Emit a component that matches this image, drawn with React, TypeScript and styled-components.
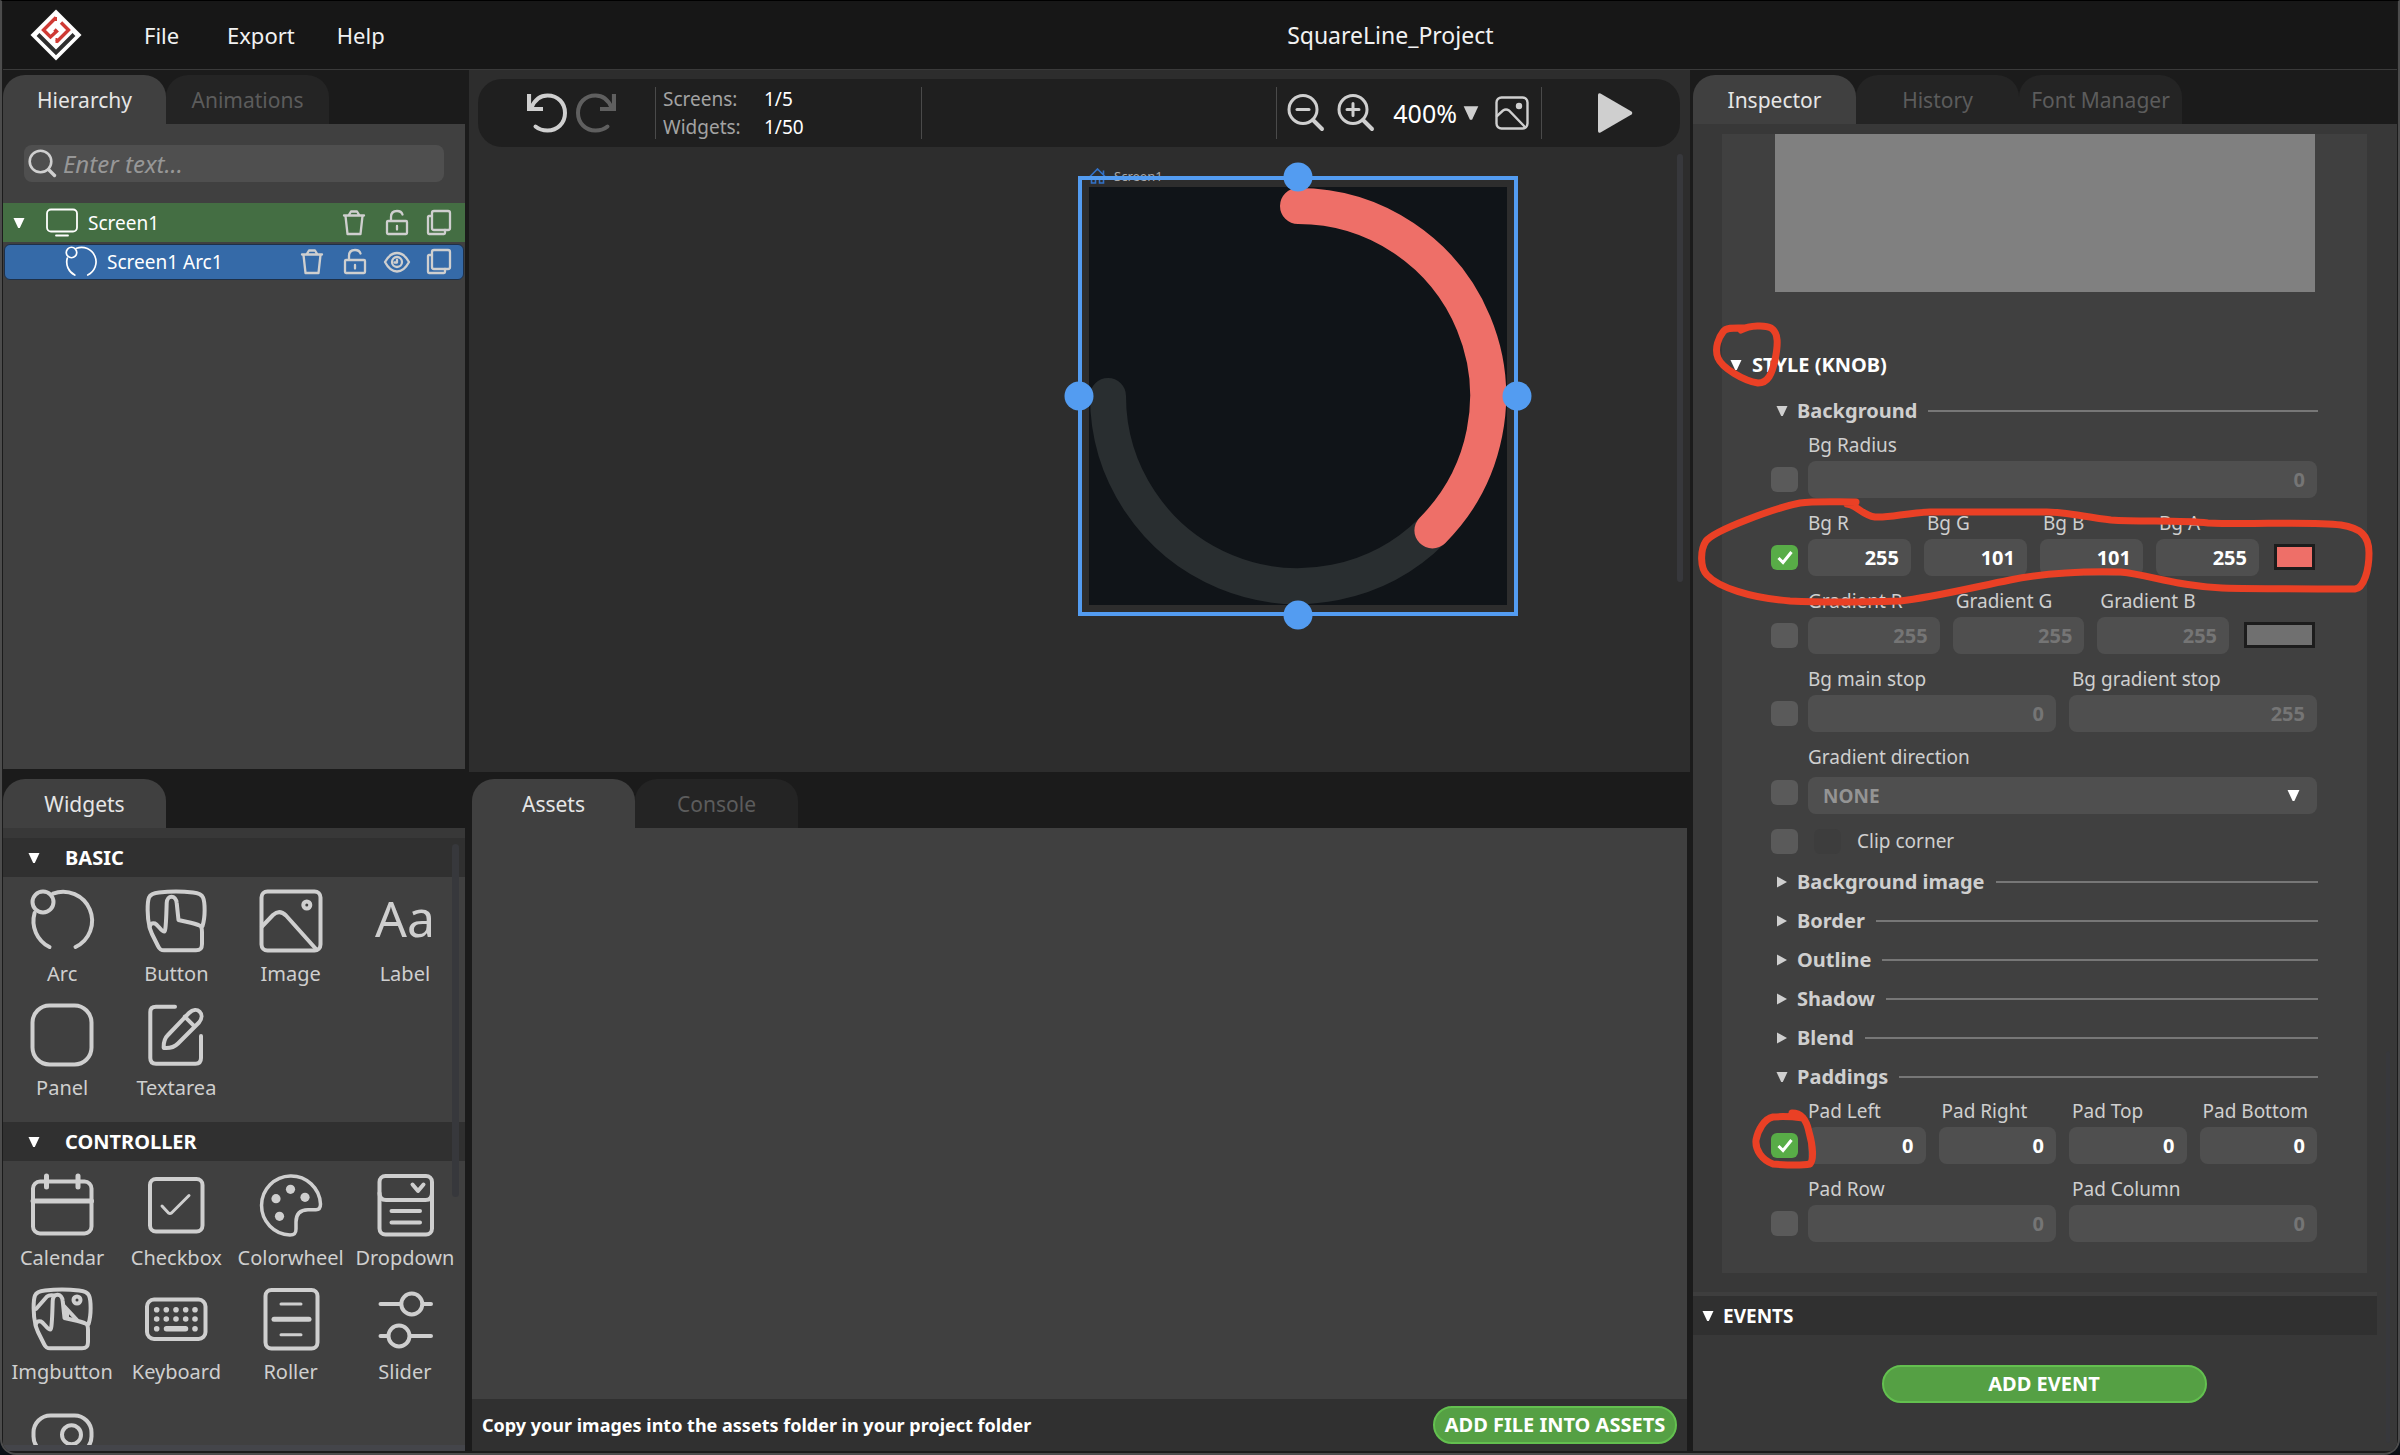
import React, { useId, useState } from "react";
import styled, { createGlobalStyle, css } from "styled-components";

const c = {
  ink: "#ffffff",
  soft: "#cfcfcf",
  dim: "#5c5c5c",
  frame: "#1b1b1b",
  panel: "#404040",
  gutter: "#383838",
  band: "#303030",
  field: "#4f4f4f",
  rail: "#37383c",
  green: "#55a044",
  greenEdge: "#63c04f",
  blue: "#539cf1",
  coral: "#ee6f68",
  marker: "#ea4025",
};

const GlobalStyle = createGlobalStyle`
  * { box-sizing: border-box; }
  body {
    margin: 0;
    background: #0b1016;
    color: ${c.soft};
    font-family: "Noto Sans", "Open Sans", sans-serif;
    font-size: 19px;
    line-height: 26px;
  }
  button, input, select { font: inherit; color: inherit; margin: 0; }
  button { border: 0; padding: 0; background: none; cursor: pointer; }
  svg { display: block; flex: none; }
`;

/* ---------- window frame ---------- */

const Window = styled.div`
  position: relative;
  display: flex;
  flex-direction: column;
  height: 100vh;
  padding: 0 1px 2px 1px;
  background: ${c.frame};
  border: 2px solid #4c4c4c;
  border-top: 1px solid #000;
  border-radius: 0 0 16px 16px;
  overflow: hidden;
`;

const Header = styled.header`
  display: flex;
  align-items: center;
  height: 69px;
  flex: none;
  padding-left: 27px;
  padding-right: 22px;
  background: #171717;
  border-bottom: 1px solid #3a3a3a;
`;

const Menu = styled.nav`
  display: flex;
  padding-left: 41px;
`;

const MenuButton = styled.button`
  min-width: 83px;
  padding: 0 21px;
  font-size: 22px;
  line-height: 30px;
  text-align: left;
  color: #f2f2f2;
`;

const Title = styled.h1`
  flex: 1;
  margin: 0;
  font-size: 23px;
  line-height: 30px;
  font-weight: 400;
  text-align: center;
  color: #f2f2f2;
`;

const Body = styled.div`
  display: grid;
  grid-template-columns: 462px minmax(0, 1fr) 704px;
  flex: 1;
  min-height: 0;
`;

const Column = styled.div<{ $gap: number; $top?: number }>`
  display: flex;
  flex-direction: column;
  gap: ${(p) => p.$gap}px;
  padding-top: ${(p) => p.$top ?? 0}px;
  min-width: 0;
  min-height: 0;
`;

const Dock = styled.section<{ $grow: number }>`
  display: flex;
  flex-direction: column;
  flex: ${(p) => p.$grow} 1 0;
  min-height: 0;
`;

const TabBar = styled.div`
  display: flex;
  flex: none;
`;

const TabButton = styled.button<{ $on: boolean }>`
  width: 163px;
  height: 49px;
  font-size: 21px;
  line-height: 28px;
  border-radius: 22px 22px 0 0;
  background: ${(p) => (p.$on ? c.panel : "#242424")};
  color: ${(p) => (p.$on ? "#e6e6e6" : c.dim)};
`;

const PanelBody = styled.div<{ $bg?: string }>`
  position: relative;
  display: flex;
  flex-direction: column;
  flex: 1;
  min-height: 0;
  overflow: hidden;
  background: ${(p) => p.$bg ?? c.panel};
`;

const Rail = styled.div<{ $w: number; $h: number }>`
  position: absolute;
  width: ${(p) => p.$w}px;
  height: ${(p) => p.$h}px;
  border-radius: 4px;
  background: ${c.rail};
`;
const WidgetRail = styled(Rail)`top: 16px; right: 6px;`;
const CanvasRail = styled(Rail)`top: 84px; right: 7px;`;
const InspectorRail = styled(Rail)`bottom: 8px; right: 7px;`;

/* ---------- hierarchy ---------- */

const SearchBox = styled.label`
  display: flex;
  align-items: center;
  gap: 6px;
  height: 37px;
  margin: 21px;
  padding: 0 4px;
  border-radius: 8px;
  background: ${c.field};
`;

const SearchInput = styled.input`
  flex: 1;
  min-width: 0;
  padding: 0;
  border: 0;
  outline: 0;
  background: none;
  font-size: 24px;
  line-height: 32px;
  font-style: italic;
  &::placeholder { color: #979797; opacity: 1; }
`;

const TreeRow = styled.div<{ $selected?: boolean }>`
  display: flex;
  align-items: center;
  flex: none;
  height: 39px;
  padding: 0 12px 0 10px;
  background: #446e43;
  color: ${c.ink};
  ${(p) =>
    p.$selected &&
    css`
      height: 36px;
      margin: 2px 1px 0;
      padding: 0 10px 0 60px;
      border: 1px solid #1e3048;
      border-radius: 6px;
      background: #356aa8;
    `}
`;

const TreeName = styled.span`
  flex: 1;
  padding-left: 10px;
`;

const TreeIcon = styled.span`
  display: flex;
  margin-left: 21px;
`;

const RowActions = styled.span`
  display: flex;
  gap: 14px;
`;

const IconButton = styled.button`
  display: flex;
  color: ${c.soft};
`;

/* ---------- widgets ---------- */

const GroupHeader = styled.button`
  display: flex;
  align-items: center;
  gap: 25px;
  flex: none;
  height: 39px;
  padding-left: 25px;
  background: ${c.band};
  color: ${c.ink};
  font-size: 20px;
  font-weight: 700;
`;

const WidgetStack = styled.div`
  display: flex;
  flex-direction: column;
  flex: 1;
  min-height: 0;
  padding-top: 10px;
  overflow: hidden;
  background: ${c.gutter};
`;

const WidgetGrid = styled.div`
  display: grid;
  grid-template-columns: repeat(4, minmax(0, 1fr));
  flex: none;
  padding: 0 3px 17px 2px;
  background: ${c.panel};
`;

const WidgetTile = styled.button`
  display: flex;
  flex-direction: column;
  align-items: center;
  gap: 7px;
  height: 114px;
  padding-top: 12px;
  font-size: 20px;
  line-height: 28px;
  color: ${c.soft};
`;

const GlyphSvg = styled.svg`
  overflow: visible;
`;

const BottomStrip = styled.div`
  flex: none;
  height: 6px;
  background: #44454a;
`;

/* ---------- canvas ---------- */

const Center = styled(Column)`
  padding-left: 4px;
  padding-right: 3px;
`;

const Canvas = styled.main`
  position: relative;
  display: flex;
  flex-direction: column;
  flex: 702 1 0;
  min-height: 0;
  background: #2d2d2d;
`;

const Toolbar = styled.div`
  display: flex;
  align-items: center;
  height: 68px;
  margin: 9px 10px 0 9px;
  padding: 0 47px 0 49px;
  border-radius: 24px;
  background: #1f1f1f;
`;

const Cluster = styled.div<{ $gap: number; $pad: string }>`
  display: flex;
  align-items: center;
  gap: ${(p) => p.$gap}px;
  padding: ${(p) => p.$pad};
`;

const Divider = styled.span`
  width: 1px;
  height: 52px;
  background: #4a4a4a;
`;

const Spacer = styled.span`
  flex: 1;
`;

const Stats = styled.dl`
  display: grid;
  grid-template-columns: 101px auto;
  width: 265px;
  margin: 0;
  padding-left: 7px;
  line-height: 28px;
`;
const StatName = styled.dt`color: #a3a3a3;`;
const StatValue = styled.dd`margin: 0; color: ${c.ink};`;

const ZoomButton = styled.button`
  display: flex;
  align-items: center;
  gap: 6px;
  padding: 0 4px 0 6px;
  font-size: 25px;
  line-height: 34px;
  color: ${c.ink};
`;

const Artboard = styled.div`
  position: absolute;
  left: 595px;
  top: 92px;
  width: 468px;
`;

const ScreenTag = styled.div`
  position: absolute;
  left: 25px;
  top: 5px;
  display: flex;
  align-items: center;
  gap: 8px;
  font-size: 13px;
  line-height: 18px;
  color: #a8a8a8;
`;

const ArcDrawing = styled.svg`
  position: relative;
`;

/* ---------- assets ---------- */

const AssetDock = styled(Dock)`
  margin: 0 3px;
`;

const AssetFooter = styled.footer`
  display: flex;
  align-items: center;
  justify-content: space-between;
  flex: none;
  height: 52px;
  padding: 0 10px;
  background: ${c.band};
  color: ${c.ink};
  font-weight: 700;
  font-size: 18px;
`;

const PillButton = styled.button<{ $wide?: boolean }>`
  height: 38px;
  width: ${(p) => (p.$wide ? 325 : 244)}px;
  border: 2px solid ${c.greenEdge};
  border-radius: 19px;
  background: ${c.green};
  color: ${c.ink};
  font-size: 20px;
  font-weight: 700;
  white-space: nowrap;
`;

/* ---------- inspector ---------- */

const InspectorScroll = styled.div`
  display: flex;
  flex-direction: column;
  padding-top: 10px;
`;

const Card = styled.div`
  margin: 0 30px 19px 29px;
  padding: 0 49px 20px;
  background: ${c.panel};
`;

const Preview = styled.div`
  height: 158px;
  margin: 0 3px 53px 4px;
  background: #808080;
`;

const StyleHeader = styled.button`
  display: flex;
  align-items: center;
  gap: 10px;
  height: 39px;
  margin: 0 0 7px -41px;
  color: ${c.ink};
  font-size: 20px;
  font-weight: 700;
`;

const SectionButton = styled.button`
  display: flex;
  align-items: center;
  gap: 9px;
  width: 100%;
  height: 39px;
  padding-left: 5px;
  color: ${c.soft};
  font-size: 20px;
  font-weight: 700;
  &::after {
    content: "";
    flex: 1;
    height: 2px;
    margin-left: 2px;
    background: #777;
  }
`;

const TriSlot = styled.span`
  display: flex;
  justify-content: center;
  width: 12px;
`;

const Row = styled.div`
  display: flex;
  align-items: flex-end;
  gap: 10px;
  margin-bottom: 11px;
  padding: 1px 1px 0 0;
  margin-top: -1px;
`;

const Group = styled.div`
  padding-top: 1px;
`;

const InlineRow = styled(Row)`
  align-items: center;
  gap: 16px;
  height: 33px;
  margin-bottom: 5px;
`;

const Fields = styled.div`
  display: flex;
  align-items: flex-end;
  gap: 13px;
  flex: 1;
  min-width: 0;
`;

const FieldBox = styled.label<{ $gap?: number }>`
  display: flex;
  flex-direction: column;
  gap: ${(p) => p.$gap ?? 2}px;
  flex: 1 1 0;
  min-width: 0;
`;

const FieldName = styled.span`
  line-height: 28px;
  white-space: nowrap;
  ${FieldBox} + ${FieldBox} & { padding-left: 3px; }
`;

const NumberInput = styled.input`
  width: 100%;
  height: 37px;
  padding: 0 12px;
  border: 0;
  outline: 0;
  border-radius: 8px;
  background: ${c.field};
  color: ${c.ink};
  font-size: 20px;
  font-weight: 700;
  text-align: right;
  &:disabled { color: #757575; }
`;

const SelectShell = styled.span`
  display: grid;
  align-items: center;
  > * { grid-area: 1 / 1; }
  > svg { justify-self: end; margin-right: 17px; pointer-events: none; }
`;

const Select = styled.select`
  width: 100%;
  height: 37px;
  padding: 0 15px;
  border: 0;
  border-radius: 8px;
  appearance: none;
  background: ${c.field};
  color: #949494;
  font-weight: 700;
`;

const Tick = styled.span<{ $raise?: boolean }>`
  display: grid;
  place-items: center;
  width: 27px;
  height: 37px;
  margin-bottom: ${(p) => (p.$raise ? 3 : 0)}px;
  > * { grid-area: 1 / 1; }
  > svg { pointer-events: none; }
`;

const TickInput = styled.input<{ $faint?: boolean }>`
  appearance: none;
  width: 27px;
  height: 25px;
  border-radius: 6px;
  background: ${(p) => (p.$faint ? "#3d3d3d" : "#5a5a5a")};
  &:checked { background: #58ac47; }
`;

const Swatch = styled.input<{ $w: number }>`
  appearance: none;
  width: ${(p) => p.$w}px;
  height: 26px;
  margin: 0 2px 6px;
  padding: 0;
  border: 3px solid #1c1c1c;
  background: none;
  &::-webkit-color-swatch-wrapper { padding: 0; }
  &::-webkit-color-swatch { border: 0; border-radius: 0; }
`;

const EventsHeader = styled.button`
  display: flex;
  align-items: center;
  gap: 9px;
  height: 43px;
  margin-right: 20px;
  padding-left: 9px;
  border-top: 4px solid #3e3e3e;
  background: ${c.band};
  color: ${c.ink};
  font-weight: 700;
`;

const EventsBody = styled.div`
  display: flex;
  justify-content: center;
  padding: 30px 58px 0 56px;
`;

const Annotations = styled.svg`
  position: absolute;
  top: 0;
  right: 0;
  pointer-events: none;
`;

/* ---------- icons ---------- */

const Tri = ({ right, size = 12, color = "currentColor" }: { right?: boolean; size?: number; color?: string }) => (
  <svg width={size} height={size} viewBox="0 0 12 12" fill={color} aria-hidden>
    <path d={right ? "M1 0.5 L11 6 L1 11.5 Z" : "M0.5 1 H11.5 L6.8 11 H5.2 Z"} />
  </svg>
);

const Logo = () => (
  <svg width="52" height="52" viewBox="0 0 52 52" aria-hidden>
    <path d="M26 0.5 L51.5 26 L26 51.5 L0.5 26 Z" fill="#fff" />
    <g fill="none" strokeWidth="3.4">
      <path d="M8 25.5 L26 43.5 L44 25.5" stroke="#2f2f2f" strokeWidth="4" />
      <path d="M26 8.5 L13.5 21 L20.5 28 L26.5 22.5 L24.5 20.5" stroke="#cf3a34" />
      <path d="M31 13.5 L38.5 21 L26.5 33" stroke="#cf3a34" />
      <path d="M26 8 V12 M26.5 29 V34" stroke="#cf3a34" strokeWidth="2" />
    </g>
  </svg>
);

const Small = ({ children, size = 28 }: { children: React.ReactNode; size?: number }) => (
  <svg width={size} height={size} viewBox="0 0 28 28" fill="none" stroke="currentColor" strokeWidth="2.3" strokeLinecap="round" strokeLinejoin="round" aria-hidden>
    {children}
  </svg>
);

const Trash = () => (
  <Small><path d="M3 6.500 H23 M4.500 7 L6.500 25 H19.500 L21.500 7 M7.500 6.500 L10 2.500 H16 L18.500 6.500" /></Small>
);
const Unlock = () => (
  <Small><path d="M5 12 H23 Q24 12 24 13 V24 Q24 25 23 25 H5 Q4 25 4 24 V13 Q4 12 5 12 M8 12 V8 Q8 2 14 2 Q18.5 2 19.5 5.5 M14 17 V20.5" /></Small>
);
const Copy = () => (
  <Small><rect x="7" y="2" width="18" height="19" rx="2" /><path d="M7 7 H4 Q3 7 3 8 V24 Q3 25 4 25 H19 Q20 25 20 24 V21" /></Small>
);
const Eye = () => (
  <Small><path d="M2 14 Q7 5 14 5 Q21 5 26 14 Q21 23.5 14 23.5 Q7 23.5 2 14 Z" /><circle cx="14" cy="14" r="5" /><path d="M14 12 V14.5 H11.5" /></Small>
);

const SearchIcon = () => (
  <svg width="29" height="29" viewBox="0 0 29 29" fill="none" stroke="#d0d0d0" strokeWidth="2.6" strokeLinecap="round" aria-hidden>
    <circle cx="12.5" cy="12.5" r="10.8" /><path d="M20.5 20.5 L26.5 26.5" strokeWidth="3.4" />
  </svg>
);

const Monitor = () => (
  <svg width="32" height="29" viewBox="0 0 32 29" fill="none" stroke="#fff" strokeWidth="1.8" strokeLinecap="round" aria-hidden>
    <rect x="1" y="1.5" width="30" height="22" rx="4" /><path d="M10 27.5 H22" />
  </svg>
);

const ArcShape = () => (
  <>
    <circle cx="13" cy="13" r="10.5" />
    <path d="M23 4.6 A29 29 0 0 1 45.5 58" />
    <path d="M4.6 24 A29 29 0 0 0 19.5 58" />
  </>
);

const SmallArc = () => (
  <svg width="32" height="32" viewBox="0 0 64 64" fill="none" stroke="#fff" strokeWidth="3.4" strokeLinecap="round" aria-hidden><ArcShape /></svg>
);

const Undo = ({ flip, color }: { flip?: boolean; color: string }) => (
  <svg width="40" height="40" viewBox="0 0 40 40" fill="none" stroke={color} strokeWidth="4" strokeLinecap="round" aria-hidden>
    <g transform={flip ? "translate(40 0) scale(-1 1)" : undefined}>
      <path d="M2 1 V16 H16" strokeLinecap="butt" strokeWidth="4.2" />
      <path d="M4.5 14.5 C9 4 16 2.5 20.5 2.5 C31 2.5 38 10 38 20 C38 30 30.500 37.500 20.500 37.500 C15.500 37.500 11.500 36 8.500 33.500" />
    </g>
  </svg>
);

const Magnifier = ({ plus }: { plus?: boolean }) => (
  <svg width="38" height="38" viewBox="0 0 38 38" fill="none" stroke={c.soft} strokeWidth="3" strokeLinecap="round" aria-hidden>
    <circle cx="16" cy="15.500" r="14" />
    <path d="M26 26 L35 35" strokeWidth="4" />
    <path d={plus ? "M10 15.500 H22 M16 9.500 V21.500" : "M10 15.500 H22"} />
  </svg>
);

const PictureIcon = () => (
  <svg width="34" height="34" viewBox="0 0 34 34" fill="none" stroke={c.soft} strokeWidth="2.4" strokeLinecap="round" aria-hidden>
    <rect x="1.500" y="1.500" width="31" height="31" rx="5" />
    <circle cx="24" cy="10" r="2" fill={c.soft} />
    <path d="M2 20 L8 14.500 Q11 12.500 14 14.500 L30 31" />
  </svg>
);

const PlayIcon = () => (
  <svg width="36" height="40" viewBox="0 0 36 40" fill={c.soft} aria-hidden>
    <path d="M1 2 Q1 -0.500 3.500 0.500 L34.500 18.500 Q36 20 34.500 21.500 L3.500 39.500 Q1 40.500 1 38 Z" />
  </svg>
);

const HomeIcon = () => (
  <svg width="17" height="16" viewBox="0 0 17 16" fill="none" stroke="#3272c9" strokeWidth="1.6" aria-hidden>
    <path d="M1 8.500 L8.500 1 L16 8.500 M2.500 8 V15 H6.500 V11 H10.500 V15 H14.500 V8 M14.500 7 V2.500" />
  </svg>
);

const Hand = () => (
  <path d="M5.7 39 C5.700 35 8 33.500 11 34.500 C14 35.500 17 42.500 20.500 42.500 C22 42.500 22.500 20 22.700 14 C23 5.500 32 5.500 32.700 14 L34.500 31 C42 33 50 34 56 36.700 C57.500 37.500 58 40 58 43 V55 C58 59.500 56.500 61.300 52 61.300 H20 C16.500 61.300 15.500 60 14 57 L8 45 Z" />
);
const Pad = () => (
  <path d="M5.500 37.700 C3 28 3.200 13 5 8.500 C6.500 5 10 4 15 3.500 C26 2.200 38 2.200 49 3.500 C54 4 57.500 5 59 8.500 C61 13 61.500 28 58.500 37" />
);

const glyphs: Record<string, React.ReactNode> = {
  Arc: <ArcShape />,
  Button: <><Pad /><Hand /></>,
  Image: <><rect x="2.500" y="2.500" width="59" height="59" rx="6" /><circle cx="47.800" cy="16" r="3.500" /><path d="M3 37.500 L14 26 Q20.500 20 27 26.500 L57 60" /></>,
  Label: <text x="32" y="48" textAnchor="middle" fontSize="50" fill={c.soft} stroke="none">Aa</text>,
  Panel: <rect x="2.500" y="2.500" width="59" height="59" rx="17" />,
  Textarea: <><path d="M31 3.700 H12 Q6.300 3.700 6.300 9 V55 Q6.300 60.700 12 60.700 H51.500 Q57 60.700 57 55 V33" /><path d="M19.700 45 C19.500 40 20 36 23.500 32.500 L45 10 C53 2 62 11 55 19.500 L34 40.500 C30 44.500 25 45.500 19.700 45 Z M40.700 13.700 L49.700 22.700" /></>,
  Calendar: <><rect x="3" y="8.500" width="58.500" height="52" rx="7" /><path d="M3 28 H61.500" strokeWidth="5" /><path d="M16.500 3 V14 M48 3 V14" strokeWidth="5" /></>,
  Checkbox: <><rect x="6" y="6" width="52.500" height="52.500" rx="6" /><path d="M18 33 L24.500 40 Q26 41 27.500 40 L45 22.500" strokeWidth="3" /></>,
  Colorwheel: <><path d="M31 62 A29.500 29.500 0 1 1 61.500 31 C61.500 35 60 36.700 57 36.700 H49 C41 36.700 37 41 37 49 V56 C37 60 36 62 31 62 Z" strokeWidth="3.500" /><g fill={c.soft} stroke="none"><circle cx="17" cy="25.700" r="4.600" /><circle cx="31.500" cy="16.300" r="4.600" /><circle cx="46" cy="24.300" r="4.600" /><circle cx="20.500" cy="43.300" r="4.600" /></g></>,
  Dropdown: <><rect x="6.500" y="3" width="52.500" height="58.500" rx="6" /><path d="M6.500 20 Q6.500 27 13 27 H52.500 Q59 27 59 20" /><path d="M39.500 11.500 L45 18 L50.500 11.500" /><path d="M18.500 38 H47 M18.500 49.500 H47" /></>,
  Imgbutton: <><Pad /><Hand /><path d="M6 22 L17 9.500 Q19.500 7.500 24 8.500 M34 19 L47 33 M37 24 V30" /><circle cx="47" cy="13" r="3.500" /></>,
  Keyboard: <><rect x="3" y="12.500" width="58.500" height="39.500" rx="7" /><g fill={c.soft} stroke="none">{[22.7, 32, 41.7].flatMap((y) => [12.7, 22.3, 32, 41.7, 51].filter((x) => y < 40 || x < 13 || x > 50).map((x) => <circle key={`${x}-${y}`} cx={x} cy={y} r="2.800" />))}</g><path d="M22.500 41.700 H41.500" strokeWidth="5.500" /></>,
  Roller: <><rect x="6.500" y="3" width="52" height="58.500" rx="6" /><path d="M22 17 H42 M22 47.700 H42" strokeWidth="3" /><path d="M15 32.300 H50" strokeWidth="5" /></>,
  Slider: <><circle cx="38.800" cy="17" r="10.500" /><circle cx="26" cy="49" r="10.500" /><path d="M7.500 17 H28 M50 17 H58 M7.500 49 H15 M37 49 H58" /></>,
  Switch: <><rect x="3.500" y="14.500" width="58" height="38" rx="17" /><circle cx="41.500" cy="33.700" r="9.500" /></>,
};

const Glyph = ({ name }: { name: string }) => (
  <GlyphSvg width="64" height="64" viewBox="0 0 64 64" fill="none" stroke={c.soft} strokeWidth="4" strokeLinecap="round" strokeLinejoin="round" aria-hidden>
    {glyphs[name]}
  </GlyphSvg>
);

/* ---------- composed parts ---------- */

function Tabs({ names }: { names: string[] }) {
  const [active, setActive] = useState(names[0]);
  return (
    <TabBar role="tablist">
      {names.map((n) => (
        <TabButton key={n} role="tab" aria-selected={n === active} $on={n === active} onClick={() => setActive(n)}>{n}</TabButton>
      ))}
    </TabBar>
  );
}

function WidgetGroup({ title, items }: { title: string; items: string[] }) {
  return (
    <>
      <GroupHeader aria-expanded="true"><Tri />{title}</GroupHeader>
      <WidgetGrid>
        {items.map((i) => (
          <WidgetTile key={i} aria-label={i}><Glyph name={i} />{i === "Switch" ? null : i}</WidgetTile>
        ))}
      </WidgetGrid>
    </>
  );
}

function TickBox({ label, on, faint, raise, id }: { label?: string; on?: boolean; faint?: boolean; raise?: boolean; id?: string }) {
  const [checked, setChecked] = useState(!!on);
  return (
    <Tick $raise={raise}>
      <TickInput id={id} type="checkbox" aria-label={label} $faint={faint} checked={checked} onChange={(e) => setChecked(e.target.checked)} />
      {checked && (
        <svg width="18" height="18" viewBox="0 0 18 18" fill="none" stroke="#fff" strokeWidth="3" aria-hidden><path d="M2.500 9 L7 13.500 L15.500 3" /></svg>
      )}
    </Tick>
  );
}

type FieldSpec = [name: string, value: string];

function FieldRow({ fields, on, swatch }: { fields: FieldSpec[]; on?: boolean; swatch?: { color: string; width: number } }) {
  return (
    <Row>
      <TickBox on={on} label={`Override ${fields[0][0]}`} />
      <Fields>
        {fields.map(([name, value]) => (
          <FieldBox key={name}>
            <FieldName>{name}</FieldName>
            <NumberInput defaultValue={value} inputMode="numeric" disabled={!on} />
          </FieldBox>
        ))}
        {swatch && <Swatch type="color" aria-label={`${fields[0][0]} colour`} $w={swatch.width} defaultValue={swatch.color} />}
      </Fields>
    </Row>
  );
}

function Section({ name, open }: { name: string; open?: boolean }) {
  return (
    <SectionButton aria-expanded={!!open}><TriSlot><Tri right={!open} /></TriSlot>{name}</SectionButton>
  );
}

function Inspector() {
  const dirId = useId();
  const clipId = useId();
  return (
    <InspectorScroll>
      <Card>
        <Preview />
        <StyleHeader aria-expanded="true"><Tri />STYLE (KNOB)</StyleHeader>
        <Section name="Background" open />
        <Group>
          <FieldRow fields={[["Bg Radius", "0"]]} />
          <FieldRow on fields={[["Bg R", "255"], ["Bg G", "101"], ["Bg B", "101"], ["Bg A", "255"]]} swatch={{ color: c.coral, width: 41 }} />
          <FieldRow fields={[["Gradient R", "255"], ["Gradient G", "255"], ["Gradient B", "255"]]} swatch={{ color: "#707070", width: 71 }} />
          <FieldRow fields={[["Bg main stop", "0"], ["Bg gradient stop", "255"]]} />
          <Row>
            <TickBox raise label="Override gradient direction" />
            <Fields>
              <FieldBox $gap={6} htmlFor={dirId}>
                <FieldName>Gradient direction</FieldName>
                <SelectShell>
                  <Select id={dirId} defaultValue="NONE"><option>NONE</option></Select>
                  <Tri color="#fff" size={13} />
                </SelectShell>
              </FieldBox>
            </Fields>
          </Row>
          <InlineRow>
            <TickBox label="Override clip corner" />
            <TickBox id={clipId} faint />
            <label htmlFor={clipId}>Clip corner</label>
          </InlineRow>
        </Group>
        {["Background image", "Border", "Outline", "Shadow", "Blend"].map((n) => <Section key={n} name={n} />)}
        <Section name="Paddings" open />
        <Group>
          <FieldRow on fields={[["Pad Left", "0"], ["Pad Right", "0"], ["Pad Top", "0"], ["Pad Bottom", "0"]]} />
          <FieldRow fields={[["Pad Row", "0"], ["Pad Column", "0"]]} />
        </Group>
      </Card>
      <EventsHeader aria-expanded="true"><Tri />EVENTS</EventsHeader>
      <EventsBody><PillButton $wide>ADD EVENT</PillButton></EventsBody>
    </InspectorScroll>
  );
}

const Act = ({ label, children }: { label: string; children: React.ReactNode }) => (
  <IconButton aria-label={label}>{children}</IconButton>
);

export default function App() {
  return (
    <>
      <GlobalStyle />
      <Window>
        <Header>
          <Logo />
          <Menu>
            <MenuButton>File</MenuButton>
            <MenuButton>Export</MenuButton>
            <MenuButton>Help</MenuButton>
          </Menu>
          <Title>SquareLine_Project</Title>
        </Header>
        <Body>
          <Column $gap={10} $top={5}>
            <Dock $grow={694}>
              <Tabs names={["Hierarchy", "Animations"]} />
              <PanelBody>
                <SearchBox><SearchIcon /><SearchInput placeholder="Enter text..." aria-label="Search hierarchy" /></SearchBox>
                <TreeRow>
                  <Tri />
                  <TreeIcon><Monitor /></TreeIcon>
                  <TreeName>Screen1</TreeName>
                  <RowActions>
                    <Act label="Delete"><Trash /></Act>
                    <Act label="Lock"><Unlock /></Act>
                    <Act label="Duplicate"><Copy /></Act>
                  </RowActions>
                </TreeRow>
                <TreeRow $selected>
                  <SmallArc />
                  <TreeName>Screen1 Arc1</TreeName>
                  <RowActions>
                    <Act label="Delete"><Trash /></Act>
                    <Act label="Lock"><Unlock /></Act>
                    <Act label="Hide"><Eye /></Act>
                    <Act label="Duplicate"><Copy /></Act>
                  </RowActions>
                </TreeRow>
              </PanelBody>
            </Dock>
            <Dock $grow={672}>
              <Tabs names={["Widgets"]} />
              <PanelBody>
                <WidgetStack>
                  <WidgetGroup title="BASIC" items={["Arc", "Button", "Image", "Label", "Panel", "Textarea"]} />
                  <WidgetGroup title="CONTROLLER" items={["Calendar", "Checkbox", "Colorwheel", "Dropdown", "Imgbutton", "Keyboard", "Roller", "Slider", "Switch"]} />
                </WidgetStack>
                <BottomStrip />
                <WidgetRail $w={7} $h={353} />
              </PanelBody>
            </Dock>
          </Column>

          <Center $gap={7}>
            <Canvas>
              <Toolbar>
                <Cluster $gap={9} $pad="0 39px 0 0">
                  <Act label="Undo"><Undo color={c.soft} /></Act>
                  <Act label="Redo"><Undo flip color="#5f5f5f" /></Act>
                </Cluster>
                <Divider />
                <Stats>
                  <StatName>Screens:</StatName><StatValue>1/5</StatValue>
                  <StatName>Widgets:</StatName><StatValue>1/50</StatValue>
                </Stats>
                <Divider />
                <Spacer />
                <Divider />
                <Cluster $gap={12} $pad="0 12px 0 10px">
                  <Act label="Zoom out"><Magnifier /></Act>
                  <Act label="Zoom in"><Magnifier plus /></Act>
                  <ZoomButton>400%<Tri size={16} color={c.soft} /></ZoomButton>
                  <Act label="Show image"><PictureIcon /></Act>
                </Cluster>
                <Divider />
                <Cluster $gap={0} $pad="0 0 0 55px">
                  <Act label="Play"><PlayIcon /></Act>
                </Cluster>
              </Toolbar>
              <Artboard>
                <ScreenTag><HomeIcon />Screen1</ScreenTag>
                <ArcDrawing width="468" height="468" viewBox="0 0 468 468" fill="none">
                  <rect x="25" y="25" width="418" height="418" fill="#101418" />
                  <g strokeWidth="36" strokeLinecap="round">
                    <path d="M44 234 A190 190 0 0 0 368.400 368.400" stroke="#292e30" />
                    <path d="M234 44 A190 190 0 0 1 368.400 368.400" stroke={c.coral} />
                  </g>
                  <rect x="16" y="16" width="436" height="436" stroke={c.blue} strokeWidth="4" />
                  <g fill={c.blue}>
                    <circle cx="234" cy="15" r="14.500" /><circle cx="15" cy="234" r="14.500" />
                    <circle cx="453" cy="234" r="14.500" /><circle cx="234" cy="453" r="14.500" />
                  </g>
                </ArcDrawing>
              </Artboard>
              <CanvasRail $w={6} $h={428} />
            </Canvas>
            <AssetDock $grow={672}>
              <Tabs names={["Assets", "Console"]} />
              <PanelBody />
              <AssetFooter>
                <span>Copy your images into the assets folder in your project folder</span>
                <PillButton>ADD FILE INTO ASSETS</PillButton>
              </AssetFooter>
            </AssetDock>
          </Center>

          <Column $gap={0} $top={5}>
            <Dock $grow={1}>
              <Tabs names={["Inspector", "History", "Font Manager"]} />
              <PanelBody $bg={c.gutter}>
                <Inspector />
                <InspectorRail $w={4} $h={392} />
              </PanelBody>
            </Dock>
          </Column>
        </Body>
        <Annotations width="710" height="1200" viewBox="1688 1 710 1200" fill="none" stroke={c.marker} strokeWidth="7" strokeLinecap="round" strokeLinejoin="round" aria-hidden>
          <path d="M1741 330 C1750 325 1766 325 1771 328 C1779 333 1778 345 1775 360 C1772 374 1768 383 1758 383 C1744 381 1722 368 1718 358 C1714 348 1719 337 1723 332 C1726 327 1736 328 1745 328" />
          <path d="M1856 502 C1835 502 1815 501 1800 503 C1775 508 1715 530 1706 541 C1700 550 1700 568 1707 575 C1718 587 1750 598 1790 601 C1830 603 1870 602 1900 601 C1930 598 1975 587 2010 580 C2050 572 2085 571 2121 572 C2150 575 2175 586 2222 588 C2260 589 2320 589 2355 589 C2364 588 2369 570 2369 553 C2369 535 2360 528 2341 525 C2310 521 2250 525 2208 523 C2180 520 2140 522 2111 520 C2085 517 2065 512 2047 512 L1930 512 C1905 513 1890 518 1875 517 C1862 515 1857 505 1847 504" />
          <path d="M1792 1113 C1802 1113 1807 1122 1809 1132 C1813 1146 1814 1160 1810 1164 C1800 1166 1785 1165 1773 1164 C1762 1160 1755 1150 1756 1140 C1758 1130 1764 1119 1773 1117 C1785 1116 1795 1117 1803 1118" />
        </Annotations>
      </Window>
    </>
  );
}
